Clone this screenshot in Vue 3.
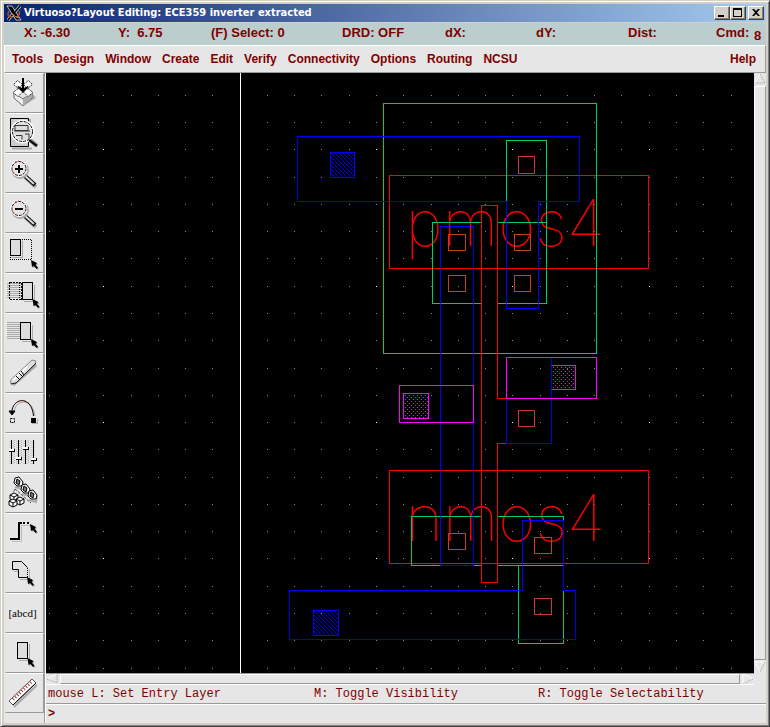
<script setup>
const readouts = ['X: -6.30', 'Y:  6.75', '(F) Select: 0', 'DRD: OFF', 'dX:', 'dY:', 'Dist:', 'Cmd:']
const menus = ['Tools', 'Design', 'Window', 'Create', 'Edit', 'Verify', 'Connectivity', 'Options', 'Routing', 'NCSU']
const tools = [
  { id: 'save', label: 'Save' },
  { id: 'fit', label: 'Fit' },
  { id: 'zoomin', label: 'Zoom in' },
  { id: 'zoomout', label: 'Zoom out' },
  { id: 'stretch', label: 'Stretch' },
  { id: 'copy', label: 'Copy' },
  { id: 'move', label: 'Move' },
  { id: 'delete', label: 'Delete' },
  { id: 'undo', label: 'Undo' },
  { id: 'props', label: 'Properties' },
  { id: 'instance', label: 'Instance' },
  { id: 'path', label: 'Path' },
  { id: 'polygon', label: 'Polygon' },
  { id: 'text', label: 'Label' },
  { id: 'rect', label: 'Rectangle' },
  { id: 'ruler', label: 'Ruler' }
]

// snap grid: every fifth dot is a major one
const dots = []
for (let r = 0; r < 22; r++) {
  for (let c = 0; c < 26; c++) {
    dots.push({
      x: Math.floor(49.25 + 27.27 * c),
      y: Math.floor(95.33 + 27.27 * r),
      major: c % 5 === 2 && r % 5 === 2
    })
  }
}

// contact cuts: x, y, width, height
const contacts = [
  [518, 156, 16, 17], [448, 234, 17, 16], [514, 234, 16, 16],
  [448, 275, 17, 16], [514, 275, 16, 16], [518, 410, 16, 16],
  [448, 533, 17, 16], [534, 537, 17, 16], [534, 598, 17, 16]
]

// fills a box with single pixels wherever the test holds
function pixels(x0, y0, x1, y1, test) {
  let d = ''
  for (let y = y0 + 1; y < y1; y++) {
    for (let x = x0 + 1; x < x1; x++) {
      if (test(x - x0, y - y0)) d += `M${x} ${y}h1v1h-1z`
    }
  }
  return d
}
const diagonal = (x, y) => (x - y + 400) % 4 === 0
const stipple = (x, y) => y % 2 === 0 && (x + y) % 4 === 0
const hatched = [[330, 152, 354, 177], [313, 610, 338, 635]].map(b => pixels(...b, diagonal)).join('')
const stippled = [[403, 393, 428, 418], [551, 365, 575, 389]].map(b => pixels(...b, stipple)).join('')
</script>

<template>
  <div class="window">
    <header class="titlebar">
      <svg class="logo" width="16" height="16" viewBox="0 0 16 16" aria-hidden="true">
        <path d="M1 1h5l9 14h-5z" fill="#000" stroke="#b8b8b8" stroke-width="1" />
        <path d="M14 1L9 7M7 9l-5 6" stroke="#c8c8c8" stroke-width="3" />
        <path d="M14 1L9 7M7 9l-5 6" stroke="#000" stroke-width="1.5" />
        <path d="M3 6Q0 12 6 12M10 12Q15 10 13 6" fill="none" stroke="#c8502c" stroke-width="1.3" />
        <path d="M6 9Q9 12 13 13" fill="none" stroke="#d8a040" />
      </svg>
      <h1>Virtuoso?Layout Editing: ECE359 inverter extracted</h1>
      <div class="controls">
        <button aria-label="Minimize"><svg width="12" height="10" viewBox="0 0 12 10"><path d="M2 7h6v2H2z" /></svg></button>
        <button aria-label="Maximize"><svg width="12" height="10" viewBox="0 0 12 10"><path d="M1 0h9v9H1zM2 2v6h7V2z" fill-rule="evenodd" /></svg></button>
        <button class="close" aria-label="Close"><svg width="12" height="10" viewBox="0 0 12 10"><path d="M2 1h2l2 2 2-2h2L7 4.500l3 3.500H8L6 6 4 8H2l3-3.500z" /></svg></button>
      </div>
    </header>

    <div class="status">
      <span v-for="r in readouts" :key="r">{{ r }}</span>
      <span class="count">8</span>
    </div>

    <nav class="menubar">
      <button v-for="m in menus" :key="m">{{ m }}</button>
      <button class="help">Help</button>
    </nav>

    <main class="work">
      <aside class="toolbar">
        <button v-for="t in tools" :key="t.id" :aria-label="t.label">
          <span v-if="t.id === 'text'" class="abcd">[abcd]</span>
          <svg v-else width="38" height="38" viewBox="1 1 38 38" fill="none" stroke="#000">
            <template v-if="t.id === 'save'">
              <path d="M18 33l13-8-4-5-9 5z" fill="#aaa" stroke="none" />
              <path d="M9 20l9 6 9-6v5l-9 8-9-8z" fill="#eee" stroke="#666" />
              <path d="M18 26v7l8-7v-5z" fill="#aaa" stroke="none" />
              <path d="M12.500 7.500l-4 4 5 4 4-4zM23.500 7.500l4 4-5 4-4-4zM13 15.500l-5 4 5 4 5-5zM23 15.500l5 4-5 4-5-5z" fill="#fff" stroke="#333" stroke-dasharray="2 1" />
              <path d="M18 5v12" stroke-width="2" />
              <path d="M13 13.500l5 6 5-6-5 2.500z" fill="#000" />
            </template>
            <template v-else-if="t.id === 'fit'">
              <path d="M7 35.500h20M25 6v10" stroke="#aaa" stroke-width="2" />
              <path d="M5.500 5.500h18v28h-18z" fill="#ccc" />
              <circle cx="17.500" cy="18.500" r="10.500" fill="#ddd" stroke="#fff" stroke-width="3" />
              <circle cx="17.500" cy="18.500" r="10" stroke-dasharray="3 1" />
              <path d="M10 12.500h13v5H10zM9 18h16M11 22.500h6v4M20 21h4v5" stroke="#333" />
              <path d="M25 27l7 6" stroke="#888" stroke-width="4" />
              <path d="M24 27l8 6" stroke-width="2" />
            </template>
            <template v-else-if="t.id === 'zoomin' || t.id === 'zoomout'">
              <path d="M20 24l11 10" stroke="#aaa" stroke-width="4" />
              <path d="M19 22l11 10" stroke="#000" stroke-width="4" />
              <path d="M19 22l10 9" stroke="#ddd" stroke-width="2" />
              <circle cx="15" cy="17" r="8" stroke="#aaa" stroke-width="2" />
              <circle cx="14" cy="15.500" r="7.500" fill="#e6e6e6" stroke="#fff" stroke-width="2" />
              <circle cx="14" cy="15.500" r="7" stroke="#200" stroke-dasharray="3 1" />
              <path d="M10 9Q14 6 18 10M7 17q1 4 4 5" stroke="#c44" stroke-width="1" stroke-dasharray="1 2" />
              <path d="M10 16h8" stroke-width="2" />
              <path v-if="t.id === 'zoomin'" d="M14 12v8" stroke-width="2" />
            </template>
            <template v-else-if="t.id === 'stretch'">
              <g shape-rendering="crispEdges">
                <path d="M7 24.500h10.500v-17" stroke="#aaa" />
                <path d="M5.500 6.500h10v16h-10z" fill="#ddd" />
                <path d="M17 6.500h9.500v20h-21V23" stroke-dasharray="1 1" />
              </g>
              <path class="cursor" d="M26 27l1 7 2-1 2.500 3 1.500-1.500-2.500-2.500 1.500-2z" />
            </template>
            <template v-else-if="t.id === 'copy'">
              <g shape-rendering="crispEdges">
                <path v-for="y in 8" :key="y" :d="`M2 ${8.5 + y * 2}h14`" stroke="#aaa" />
                <path d="M4.500 9.500h12v17h-12z" stroke-dasharray="2 1" />
                <path d="M14.500 10v16" stroke-dasharray="1 1" />
                <path d="M19 28.500h10.500V12" stroke="#aaa" />
                <path d="M17.500 9.500h10v17h-10z" fill="#ddd" />
              </g>
              <path class="cursor" d="M27.500 26l1 7 2-1 2.500 3 1.500-1.500-2.500-2.500 1.500-2z" />
            </template>
            <template v-else-if="t.id === 'move'">
              <g shape-rendering="crispEdges">
                <path v-for="y in 9" :key="y" :d="`M2 ${7.5 + y * 2}h13`" stroke="#aaa" />
                <path d="M17 28.500h10.500V12" stroke="#aaa" />
                <path d="M15.500 9.500h10v17h-10z" fill="#ddd" />
              </g>
              <path class="cursor" d="M26 26l1 7 2-1 2.500 3 1.500-1.500-2.500-2.500 1.500-2z" />
            </template>
            <template v-else-if="t.id === 'delete'">
              <path d="M8 32L31 12" stroke="#aaa" stroke-width="3" />
              <path d="M5.500 27L27 7l4 1-1 4L11 30l-5 1z" fill="#ddd" stroke="#888" />
              <path d="M6 31l5-1L31 10" stroke="#222" />
              <path d="M8 27L22 14" stroke="#fff" stroke-width="2" />
              <path d="M11 23l4 4M14 20l4 4M16 18l3 4" stroke="#000" />
            </template>
            <template v-else-if="t.id === 'undo'">
              <path d="M9 20Q10 9 19 9t11 14" stroke="#aaa" />
              <path d="M6.500 20C8 3 27 3 28.500 23" stroke="#100" />
              <path d="M9 12Q17 3 25 11" stroke="#b33" stroke-dasharray="1 3" />
              <path d="M4 18h6L7 22z" fill="#000" />
              <path d="M5.500 25.500h4v4h-4z" stroke-dasharray="2 1" />
              <path d="M27 30.500h5.500V26" stroke="#aaa" />
              <path d="M26 25h5v5h-5z" fill="#000" stroke="none" />
            </template>
            <template v-else-if="t.id === 'props'">
              <g shape-rendering="crispEdges">
                <path v-for="y in 12" :key="y" :d="`M4 ${6.5 + y * 2}h28`" stroke="#ccc" stroke-dasharray="5 2" />
                <path d="M6.500 7v24M13.500 7v24M20.500 7v24M28.500 7v24" />
                <path d="M9.500 7v24M16.500 7v24M23.500 7v24" stroke="#aaa" stroke-dasharray="1 1" />
                <path d="M4 17.500h6M11 25.500h6M18 15.500h6M26 26.500h6" stroke-width="3" />
                <path d="M4 16.500h5M11 24.500h5M18 14.500h5M26 25.500h5" stroke="#fff" stroke-width="2" />
              </g>
            </template>
            <template v-else-if="t.id === 'instance'">
              <path d="M10 16L26 30M10 16l-2 4 8 8" stroke="#555" stroke-dasharray="3 1" />
              <g v-for="p in [[12, 9], [19, 16], [26, 22]]" :key="p[0]">
                <path :d="`M${p[0] - 2} ${p[1] + 5}l7 2 1-6`" stroke="#aaa" stroke-width="2" />
                <path :d="`M${p[0] - 3} ${p[1] + 1}l1-5 4-1 4 5-1 4-5 0z`" fill="#fff" />
                <path :d="`M${p[0]} ${p[1] - 3}l-1 4 3 2 1-4z`" fill="#777" />
              </g>
              <g v-for="p in [[9, 24], [15, 28], [8, 30]]" :key="p[1]">
                <path :d="`M${p[0] - 4} ${p[1] - 2}l4-2 4 2v4l-4 2-4-2z`" fill="#fff" />
                <path :d="`M${p[0] - 4} ${p[1] - 2}l4 2 4-2M${p[0]} ${p[1]}v4`" />
              </g>
            </template>
            <template v-else-if="t.id === 'path'">
              <path d="M7 28.500h9.500V12.500h10" stroke="#bbb" />
              <path d="M5 26h9V10h3" stroke-width="2" />
              <path d="M18 10h8" stroke-width="2" stroke-dasharray="2 2" />
              <path class="cursor" d="M25 11l1 7 2-1 2.500 3 1.500-1.500-2.500-2.500 1.500-2z" />
            </template>
            <template v-else-if="t.id === 'polygon'">
              <path d="M9 18.500h4M15 26.500h9.500V16" stroke="#aaa" />
              <path d="M22.500 14.500l-6-6h-9v8h6v8h9" fill="#e2e2e2" />
              <path d="M22.500 15v9" stroke-dasharray="1 1" />
              <path class="cursor" d="M22 24l1 7 2-1 2.500 3 1.500-1.500-2.500-2.500 1.500-2z" />
            </template>
            <template v-else-if="t.id === 'rect'">
              <g shape-rendering="crispEdges">
                <path d="M14 27.500h10.500V11" stroke="#aaa" />
                <path d="M12.500 9.500h10v16h-10z" fill="#ddd" />
              </g>
              <path class="cursor" d="M22.500 25l1 7 2-1 2.500 3 1.500-1.500-2.500-2.500 1.500-2z" />
            </template>
            <template v-else>
              <path d="M9 34L32 12" stroke="#aaa" stroke-width="2" />
              <path d="M4 28L27 6l4 4L8 32z" fill="#fff" stroke="#555" />
              <path d="M8 32L31 10" />
              <path d="M8 26.500L27 8.500" stroke="#a33" stroke-width="3" stroke-dasharray="1 2" />
            </template>
          </svg>
        </button>
      </aside>

      <section class="editor">
        <div class="view">
          <svg class="canvas" role="img" aria-label="Inverter extracted layout">
            <g transform="translate(-46 -73)">
              <rect v-for="d in dots" :key="`${d.x}-${d.y}`" :x="d.x" :y="d.y" width="1" height="1" :fill="d.major ? '#fff' : '#85858f'" />
              <path d="M240 73h1v2000h-1z" fill="#fff" />
              <path :d="hatched" fill="#0000ff" shape-rendering="crispEdges" />
              <path :d="stippled" fill="#ff00ff" shape-rendering="crispEdges" />
            </g>
            <g transform="translate(-45.500 -72.500)" fill="none" shape-rendering="crispEdges">
              <g class="poly">
                <path d="M389 175H648V268H389Z" />
                <path d="M389 470H648V563H389Z" />
              </g>
              <text class="name" x="405" y="245">pmos4</text>
              <text class="name" x="405" y="540">nmos4</text>
              <g class="diff">
                <path d="M383 103H596V353H383Z" />
                <path d="M506 222V140H546V303H497M497 222H546M481 222H432V303H481" />
                <path d="M481 516H411V565H481M497 516H563V643H518V565M497 565H563" />
              </g>
              <path class="poly" d="M506 398H497V205H481V582H497V443H506" />
              <g class="metal">
                <path d="M297 136H579V201H538V308H506V201H297Z" />
                <path d="M440 226H473V565H440Z" />
                <path d="M506 398V443H551V357" />
                <path d="M522 520H563V590H575V639H289V590H522Z" />
                <path class="bright" d="M297 136H579M506 201V308H538V201M440 565V226H473M289 590H522V520H563" />
              </g>
              <g class="pin">
                <path d="M399 385H473V422H399Z" />
                <path d="M506 357H596V398H506Z" />
                <path d="M403 393H428V418H403Z" />
                <path d="M551 365H575V389H551Z" />
              </g>
              <g class="metal">
                <path d="M551 358V397" />
                <path class="bright" d="M330 152H354V177H330Z" />
                <path class="bright" d="M313 610H338V635H313Z" />
              </g>
              <rect v-for="(c, i) in contacts" :key="i" class="contact" :x="c[0]" :y="c[1]" :width="c[2]" :height="c[3]" />
            </g>
          </svg>
          <div class="vscroll">
            <button aria-label="Scroll up"><svg width="12" height="12" viewBox="0 0 12 12"><path d="M6 1L1 10" class="lit" /><path d="M6 1l5 9H1" class="dim" /></svg></button>
            <div class="thumb"></div>
            <button aria-label="Scroll down"><svg width="12" height="12" viewBox="0 0 12 12"><path d="M1 1h10M1 1l5 10" class="lit" /><path d="M11 1L6 11" class="dim" /></svg></button>
          </div>
        </div>
        <div class="hscroll">
          <button aria-label="Scroll left"><svg width="12" height="10" viewBox="0 0 12 10"><path d="M11 0L1 5" class="lit" /><path d="M1 5l10 4V0" class="dim" /></svg></button>
          <div class="thumb"></div>
          <button aria-label="Scroll right"><svg width="12" height="10" viewBox="0 0 12 10"><path d="M1 10V0l10 5" class="lit" /><path d="M11 5L1 10" class="dim" /></svg></button>
        </div>
        <div class="mouse">
          <span>mouse L: Set Entry Layer</span>
          <span>M: Toggle Visibility</span>
          <span>R: Toggle Selectability</span>
        </div>
        <div class="prompt">
          <label for="command">&gt;</label>
          <input id="command" type="text" autocomplete="off" />
        </div>
      </section>
    </main>
  </div>
</template>

<style>
body {
  margin: 0;
  background: #d4d0c8;
}
</style>

<style scoped>
.window {
  box-sizing: border-box;
  min-height: 100vh;
  display: flex;
  flex-direction: column;
  padding: 3px;
  border: 1px solid;
  border-color: #d4d0c8 #404040 #404040 #d4d0c8;
  box-shadow: inset 1px 1px #fff, inset -1px -1px #808080;
  background: #d4d0c8;
  font-family: "Liberation Sans", Arial, sans-serif;
  font-weight: bold;
  color: #800000;
}
button {
  margin: 0;
  padding: 0;
  border: 0;
  background: none;
  font: inherit;
  color: inherit;
}
svg {
  display: block;
}
.titlebar {
  display: flex;
  align-items: center;
  height: 18px;
  padding: 0 2px;
  gap: 2px;
  background: linear-gradient(90deg, #0a246a, #a6caf0);
}
.titlebar h1 {
  flex: 1;
  margin: 0;
  font: bold 11px/18px "DejaVu Sans Condensed", "Noto Sans", sans-serif;
  color: #fff;
  white-space: nowrap;
}
.controls {
  display: flex;
}
.controls button {
  width: 16px;
  height: 14px;
  box-sizing: border-box;
  padding: 1px;
  border: 1px solid;
  border-color: #fff #404040 #404040 #fff;
  box-shadow: inset -1px -1px #808080;
  background: #d4d0c8;
}
.controls .close {
  margin-left: 2px;
}
.status {
  display: grid;
  grid-template-columns: 94fr 93fr 131fr 103fr 91fr 92fr 88fr 38fr 12fr;
  height: 22px;
  margin-top: 1px;
  padding-left: 20px;
  background: #bccdcd;
  font-size: 13px;
  line-height: 20px;
  white-space: pre;
}
.status .count {
  line-height: 26px;
}
.menubar {
  display: flex;
  gap: 11px;
  height: 26px;
  padding: 0 9px 0 7px;
  border: 1px solid;
  border-color: #fff #9a9a9a #9a9a9a #fff;
  background: #e6e6e6;
  font-size: 12px;
  line-height: 26px;
}
.menubar .help {
  margin-left: auto;
}
.work {
  flex: 1;
  display: flex;
  background: #e6e6e6;
}
.toolbar {
  box-sizing: border-box;
  width: 42px;
  padding-left: 1px;
  border-right: 1px solid #fff;
  box-shadow: inset -1px 0 #9a9a9a;
}
.toolbar button {
  display: block;
  box-sizing: border-box;
  width: 39px;
  height: 40px;
  border: 1px solid;
  border-color: #fff #9a9a9a #9a9a9a #e6e6e6;
}
.cursor {
  fill: #000;
  stroke: none;
  filter: drop-shadow(1px 1px 0 #aaa);
}
.abcd {
  display: block;
  padding-right: 4px;
  font: 11px/36px "Liberation Serif", serif;
  color: #000;
  text-align: center;
}
.editor {
  flex: 1;
  min-width: 0;
  display: flex;
  flex-direction: column;
}
.view {
  flex: 1;
  display: flex;
}
.canvas {
  flex: 1;
  min-width: 0;
  background: #000;
  overflow: hidden;
}
.diff {
  stroke: #00cc66;
}
.poly {
  stroke: #ff0000;
}
.metal {
  stroke: #0000e0;
}
.metal .bright {
  stroke: #0000ff;
}
.pin {
  stroke: #ff00ff;
}
.contact {
  stroke: #c04020;
}
.name {
  font: 100 64px Inter, sans-serif;
  fill: #ff0000;
}
.vscroll {
  display: flex;
  flex-direction: column;
  gap: 1px;
  width: 12px;
}
.lit {
  fill: none;
  stroke: #fff;
}
.dim {
  fill: none;
  stroke: #9a9a9a;
  stroke-dasharray: 1 1;
}
.thumb {
  flex: 1;
  border: 1px solid;
  border-color: #fff #9a9a9a #9a9a9a #fff;
}
.hscroll {
  display: flex;
  gap: 2px;
  height: 10px;
  margin-right: 12px;
  border-top: 1px solid #9a9a9a;
  border-bottom: 1px solid #fff;
}
.mouse {
  display: grid;
  grid-template-columns: 266fr 224fr 228fr;
  height: 18px;
  padding-left: 2px;
  border-bottom: 1px solid #9a9a9a;
  font: 12px/18px "Liberation Mono", monospace;
  white-space: nowrap;
}
.prompt {
  display: flex;
  height: 18px;
  padding-left: 2px;
  border-top: 1px solid #fff;
  font: bold 12px/18px "Liberation Mono", monospace;
}
.prompt input {
  flex: 1;
  min-width: 0;
  margin: 0;
  padding: 0;
  border: 0;
  outline: 0;
  background: none;
  font: inherit;
  color: inherit;
}
</style>
